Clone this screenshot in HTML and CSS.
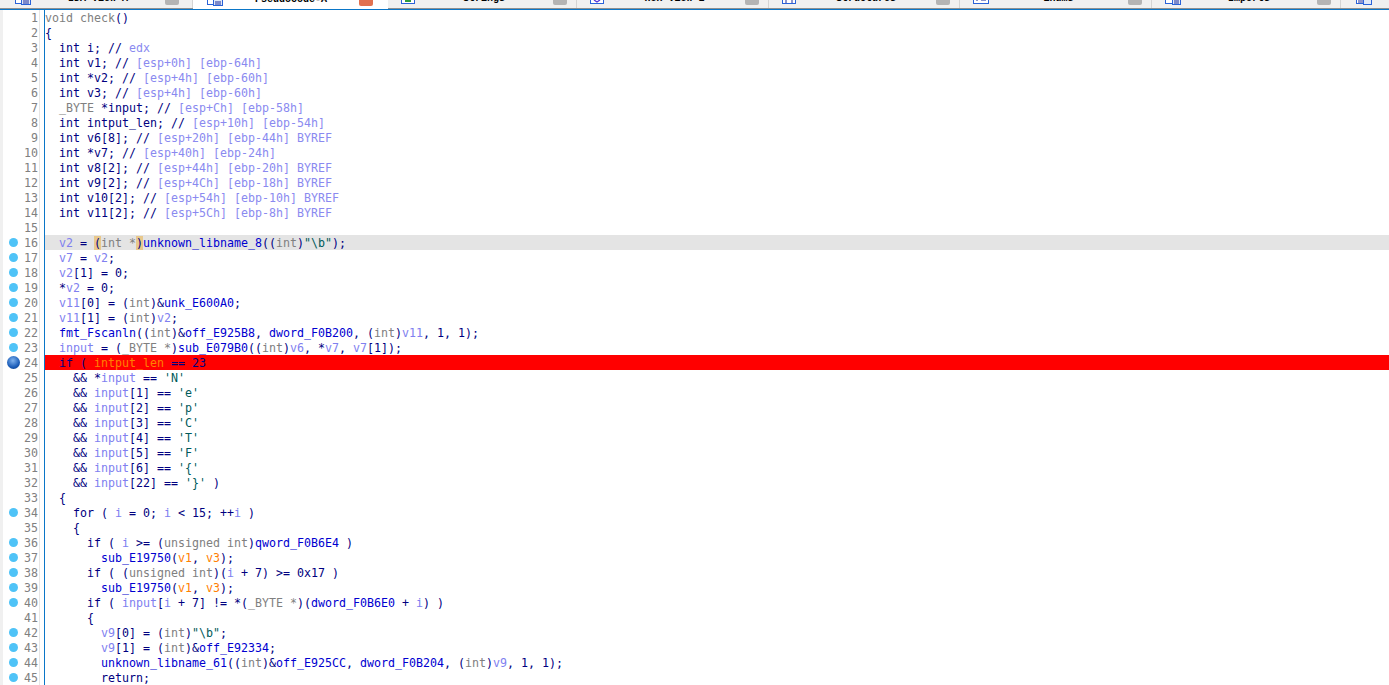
FILE: index.html
```html
<!DOCTYPE html>
<html lang="en">
<head>
<meta charset="utf-8">
<title>Pseudocode-A</title>
<link rel="stylesheet" href="styles.css">
</head>
<body>
<div class="tabs">
  <div class="tab tab-first"><svg class="ico" viewBox="0 0 16 12"><rect x=".5" y=".5" width="8" height="10" fill="#fff" stroke="#2a62d8"/><rect x="6.5" y="2.5" width="9" height="9" fill="#dfe8f8" stroke="#2a62d8"/><path d="M8 8h6M8 10h6" stroke="#1a2a9c"/></svg><span class="label">IDA View-A</span><span class="close"></span></div>
  <div class="tab tab-active"><svg class="ico" viewBox="0 0 16 12"><rect x=".5" y=".5" width="8" height="10" fill="#fff" stroke="#2a62d8"/><rect x="6.5" y="2.5" width="9" height="9" fill="#dfe8f8" stroke="#2a62d8"/><path d="M8 8h6M8 10h6" stroke="#1a2a9c"/></svg><span class="label">Pseudocode-A</span><span class="close close-on"></span></div>
  <div class="tab tab-narrow"><svg class="ico ico-sm" viewBox="0 0 14 12"><rect x=".5" y=".5" width="13" height="10" fill="#fff" stroke="#2a62d8"/><path d="M4 8h6" stroke="#2e9a3e" stroke-width="2"/></svg><span class="label">Strings</span><span class="close"></span></div>
  <div class="tab"><svg class="ico ico-sm" viewBox="0 0 14 12"><rect x=".5" y=".5" width="13" height="10" fill="#fff" stroke="#2a62d8"/><path d="M4 7l3 2 3-2" fill="none" stroke="#5a3ad8" stroke-width="1.4"/></svg><span class="label">Hex View-1</span><span class="close"></span></div>
  <div class="tab tab-struct"><svg class="ico ico-sm" viewBox="0 0 14 12"><rect x=".5" y=".5" width="13" height="10" fill="#fff" stroke="#2a62d8"/><path d="M4 10V6M10 10V6" stroke="#1a2a9c"/></svg><span class="label">Structures</span><span class="close"></span></div>
  <div class="tab"><svg class="ico" viewBox="0 0 16 12"><rect x=".5" y=".5" width="15" height="10" fill="#fff" stroke="#2a62d8"/><path d="M3 7h2M8 7h5" stroke="#1a2a9c"/></svg><span class="label">Enums</span><span class="close"></span></div>
  <div class="tab tab-narrow"><svg class="ico" viewBox="0 0 16 12"><rect x=".5" y=".5" width="8" height="10" fill="#fff" stroke="#2a62d8"/><rect x="7.5" y="2.5" width="8" height="9" fill="#dfe8f8" stroke="#2a62d8"/><path d="M9 8h5M9 10h5" stroke="#1a2a9c"/></svg><span class="label">Imports</span><span class="close"></span></div>
  <div class="tab tab-last"><svg class="ico" viewBox="0 0 16 12"><rect x=".5" y=".5" width="8" height="10" fill="#fff" stroke="#2a62d8"/><rect x="7.5" y="2.5" width="8" height="9" fill="#dfe8f8" stroke="#2a62d8"/><path d="M2 7h5M2 9h5" stroke="#1a2a9c"/></svg></div>
</div>
<main class="editor">
<div class="row"><div class="gut"><span class="num">1</span></div><div class="src"><i class="g">void check</i>()</div></div>
<div class="row"><div class="gut"><span class="num">2</span></div><div class="src">{</div></div>
<div class="row"><div class="gut"><span class="num">3</span></div><div class="src">  int i; // <i class="c">edx</i></div></div>
<div class="row"><div class="gut"><span class="num">4</span></div><div class="src">  int v1; // <i class="c">[esp+0h] [ebp-64h]</i></div></div>
<div class="row"><div class="gut"><span class="num">5</span></div><div class="src">  int *v2; // <i class="c">[esp+4h] [ebp-60h]</i></div></div>
<div class="row"><div class="gut"><span class="num">6</span></div><div class="src">  int v3; // <i class="c">[esp+4h] [ebp-60h]</i></div></div>
<div class="row"><div class="gut"><span class="num">7</span></div><div class="src">  <i class="g">_BYTE</i> *input; // <i class="c">[esp+Ch] [ebp-58h]</i></div></div>
<div class="row"><div class="gut"><span class="num">8</span></div><div class="src">  int intput_len; // <i class="c">[esp+10h] [ebp-54h]</i></div></div>
<div class="row"><div class="gut"><span class="num">9</span></div><div class="src">  int v6[8]; // <i class="c">[esp+20h] [ebp-44h] BYREF</i></div></div>
<div class="row"><div class="gut"><span class="num">10</span></div><div class="src">  int *v7; // <i class="c">[esp+40h] [ebp-24h]</i></div></div>
<div class="row"><div class="gut"><span class="num">11</span></div><div class="src">  int v8[2]; // <i class="c">[esp+44h] [ebp-20h] BYREF</i></div></div>
<div class="row"><div class="gut"><span class="num">12</span></div><div class="src">  int v9[2]; // <i class="c">[esp+4Ch] [ebp-18h] BYREF</i></div></div>
<div class="row"><div class="gut"><span class="num">13</span></div><div class="src">  int v10[2]; // <i class="c">[esp+54h] [ebp-10h] BYREF</i></div></div>
<div class="row"><div class="gut"><span class="num">14</span></div><div class="src">  int v11[2]; // <i class="c">[esp+5Ch] [ebp-8h] BYREF</i></div></div>
<div class="row"><div class="gut"><span class="num">15</span></div><div class="src"></div></div>
<div class="row"><div class="gut"><span class="dot"></span><span class="num">16</span></div><div class="src src-cur">  <i class="v">v2</i> = <b class="m">(</b><i class="g">int *</i><b class="m">)</b><i class="f">unknown_libname_8</i>((<i class="g">int</i>)<i class="s">"\b"</i>);</div></div>
<div class="row"><div class="gut"><span class="dot"></span><span class="num">17</span></div><div class="src">  <i class="v">v7</i> = <i class="v">v2</i>;</div></div>
<div class="row"><div class="gut"><span class="dot"></span><span class="num">18</span></div><div class="src">  <i class="v">v2</i>[1] = 0;</div></div>
<div class="row"><div class="gut"><span class="dot"></span><span class="num">19</span></div><div class="src">  *<i class="v">v2</i> = 0;</div></div>
<div class="row"><div class="gut"><span class="dot"></span><span class="num">20</span></div><div class="src">  <i class="v">v11</i>[0] = (<i class="g">int</i>)&amp;<i class="f">unk_E600A0</i>;</div></div>
<div class="row"><div class="gut"><span class="dot"></span><span class="num">21</span></div><div class="src">  <i class="v">v11</i>[1] = (<i class="g">int</i>)<i class="v">v2</i>;</div></div>
<div class="row"><div class="gut"><span class="dot"></span><span class="num">22</span></div><div class="src">  <i class="f">fmt_Fscanln</i>((<i class="g">int</i>)&amp;<i class="f">off_E925B8</i>, <i class="f">dword_F0B200</i>, (<i class="g">int</i>)<i class="v">v11</i>, 1, 1);</div></div>
<div class="row"><div class="gut"><span class="dot"></span><span class="num">23</span></div><div class="src">  <i class="v">input</i> = (<i class="g">_BYTE *</i>)<i class="f">sub_E079B0</i>((<i class="g">int</i>)<i class="v">v6</i>, *<i class="v">v7</i>, <i class="v">v7</i>[1]);</div></div>
<div class="row"><div class="gut"><span class="dot dot-bp"></span><span class="num">24</span></div><div class="src src-bp">  if ( <i class="o">intput_len</i> == 23</div></div>
<div class="row"><div class="gut"><span class="num">25</span></div><div class="src">    &amp;&amp; *<i class="v">input</i> == <i class="s">'N'</i></div></div>
<div class="row"><div class="gut"><span class="num">26</span></div><div class="src">    &amp;&amp; <i class="v">input</i>[1] == <i class="s">'e'</i></div></div>
<div class="row"><div class="gut"><span class="num">27</span></div><div class="src">    &amp;&amp; <i class="v">input</i>[2] == <i class="s">'p'</i></div></div>
<div class="row"><div class="gut"><span class="num">28</span></div><div class="src">    &amp;&amp; <i class="v">input</i>[3] == <i class="s">'C'</i></div></div>
<div class="row"><div class="gut"><span class="num">29</span></div><div class="src">    &amp;&amp; <i class="v">input</i>[4] == <i class="s">'T'</i></div></div>
<div class="row"><div class="gut"><span class="num">30</span></div><div class="src">    &amp;&amp; <i class="v">input</i>[5] == <i class="s">'F'</i></div></div>
<div class="row"><div class="gut"><span class="num">31</span></div><div class="src">    &amp;&amp; <i class="v">input</i>[6] == <i class="s">'{'</i></div></div>
<div class="row"><div class="gut"><span class="num">32</span></div><div class="src">    &amp;&amp; <i class="v">input</i>[22] == <i class="s">'}'</i> )</div></div>
<div class="row"><div class="gut"><span class="num">33</span></div><div class="src">  {</div></div>
<div class="row"><div class="gut"><span class="dot"></span><span class="num">34</span></div><div class="src">    for ( <i class="v">i</i> = 0; <i class="v">i</i> &lt; 15; ++<i class="v">i</i> )</div></div>
<div class="row"><div class="gut"><span class="num">35</span></div><div class="src">    {</div></div>
<div class="row"><div class="gut"><span class="dot"></span><span class="num">36</span></div><div class="src">      if ( <i class="v">i</i> &gt;= (<i class="g">unsigned int</i>)<i class="f">qword_F0B6E4</i> )</div></div>
<div class="row"><div class="gut"><span class="dot"></span><span class="num">37</span></div><div class="src">        <i class="f">sub_E19750</i>(<i class="o">v1</i>, <i class="o">v3</i>);</div></div>
<div class="row"><div class="gut"><span class="dot"></span><span class="num">38</span></div><div class="src">      if ( (<i class="g">unsigned int</i>)(<i class="v">i</i> + 7) &gt;= 0x17 )</div></div>
<div class="row"><div class="gut"><span class="dot"></span><span class="num">39</span></div><div class="src">        <i class="f">sub_E19750</i>(<i class="o">v1</i>, <i class="o">v3</i>);</div></div>
<div class="row"><div class="gut"><span class="dot"></span><span class="num">40</span></div><div class="src">      if ( <i class="v">input</i>[<i class="v">i</i> + 7] != *(<i class="g">_BYTE *</i>)(<i class="f">dword_F0B6E0</i> + <i class="v">i</i>) )</div></div>
<div class="row"><div class="gut"><span class="num">41</span></div><div class="src">      {</div></div>
<div class="row"><div class="gut"><span class="dot"></span><span class="num">42</span></div><div class="src">        <i class="v">v9</i>[0] = (<i class="g">int</i>)<i class="s">"\b"</i>;</div></div>
<div class="row"><div class="gut"><span class="dot"></span><span class="num">43</span></div><div class="src">        <i class="v">v9</i>[1] = (<i class="g">int</i>)&amp;<i class="f">off_E92334</i>;</div></div>
<div class="row"><div class="gut"><span class="dot"></span><span class="num">44</span></div><div class="src">        <i class="f">unknown_libname_61</i>((<i class="g">int</i>)&amp;<i class="f">off_E925CC</i>, <i class="f">dword_F0B204</i>, (<i class="g">int</i>)<i class="v">v9</i>, 1, 1);</div></div>
<div class="row"><div class="gut"><span class="dot"></span><span class="num">45</span></div><div class="src">        return;</div></div>
</main>
</body>
</html>
```
FILE: styles.css
```css
* { box-sizing: border-box; }
html, body { margin: 0; height: 100%; overflow: hidden; background: #fff; }

.tabs {
  display: flex;
  height: 9px;
  background: #f0f0f0;
  border-bottom: 1px solid #8f8f8f;
  font: bold 10px/16px "Liberation Mono", monospace;
  color: #000;
}
.tab {
  display: flex;
  align-items: flex-end;
  flex: 0 0 192px;
  height: 8px;
  padding: 0 9px 0 13px;
  overflow: hidden;
  border-right: 1px solid #d4d4d4;
}
.tab-first { flex-basis: 193px; padding-left: 15px; padding-right: 13px; }
.tab-active { flex-basis: 195px; height: 9px; padding-left: 14px; padding-right: 15px; background: #fff; border-right: 0; }
.tab-narrow { flex-basis: 189px; }
.tab-struct { flex-basis: 191px; }
.tab-last { flex: 1; padding-left: 15px; border-right: 0; }

.ico { flex: none; width: 16px; height: 12px; margin-bottom: 3px; }
.ico-sm { width: 14px; }
.label { flex: 1; text-align: center; margin-bottom: 1px; white-space: nowrap; }
.close {
  flex: none;
  width: 14px;
  height: 10px;
  margin-bottom: 3px;
  border-radius: 2px;
  background: #b4b4b4;
}
.close-on { background: #e2714f; }

.editor {
  border-top: 1px solid #0a76c8;
  font: 11.63px/17px "DejaVu Sans Mono", monospace;
  color: #000080;
}
.row { display: flex; height: 15px; }
.gut {
  display: flex;
  align-items: center;
  flex: 0 0 44px;
  padding-right: 6px;
  border-left: 3px solid #f0f0f0;
  box-shadow: inset -4px 0 0 #fff, inset -5px 0 0 #e6e6e6;
  color: #808080;
}
.dot {
  flex: none;
  width: 9px;
  height: 9px;
  margin-left: 6px;
  border-radius: 50%;
  background: #4fc3f7;
}
.dot-bp {
  width: 13px;
  height: 13px;
  margin-left: 4px;
  background: radial-gradient(circle at 45% 35%, #7fb2ee, #1a5cb8 60%, #0b3576);
}
.num { align-self: flex-start; margin-left: auto; }
.src {
  flex: 1;
  min-width: 0;
  border-left: 1px solid #0a76c8;
  white-space: pre;
}
.src-cur { background: #e4e4e4; }
.src-bp { background: #ff0000; }

/* tokens sit above the next row's background, so underscores are not covered */
i, b { position: relative; z-index: 1; font-style: normal; font-weight: normal; }
.g { color: #808080; }
.c { color: #8a8af0; }
.v { color: #8080f0; }
.f { color: #0000d0; }
.s { color: #005a5a; }
.o { color: #ff8000; }
.m { background: #e8c88c; }
```
